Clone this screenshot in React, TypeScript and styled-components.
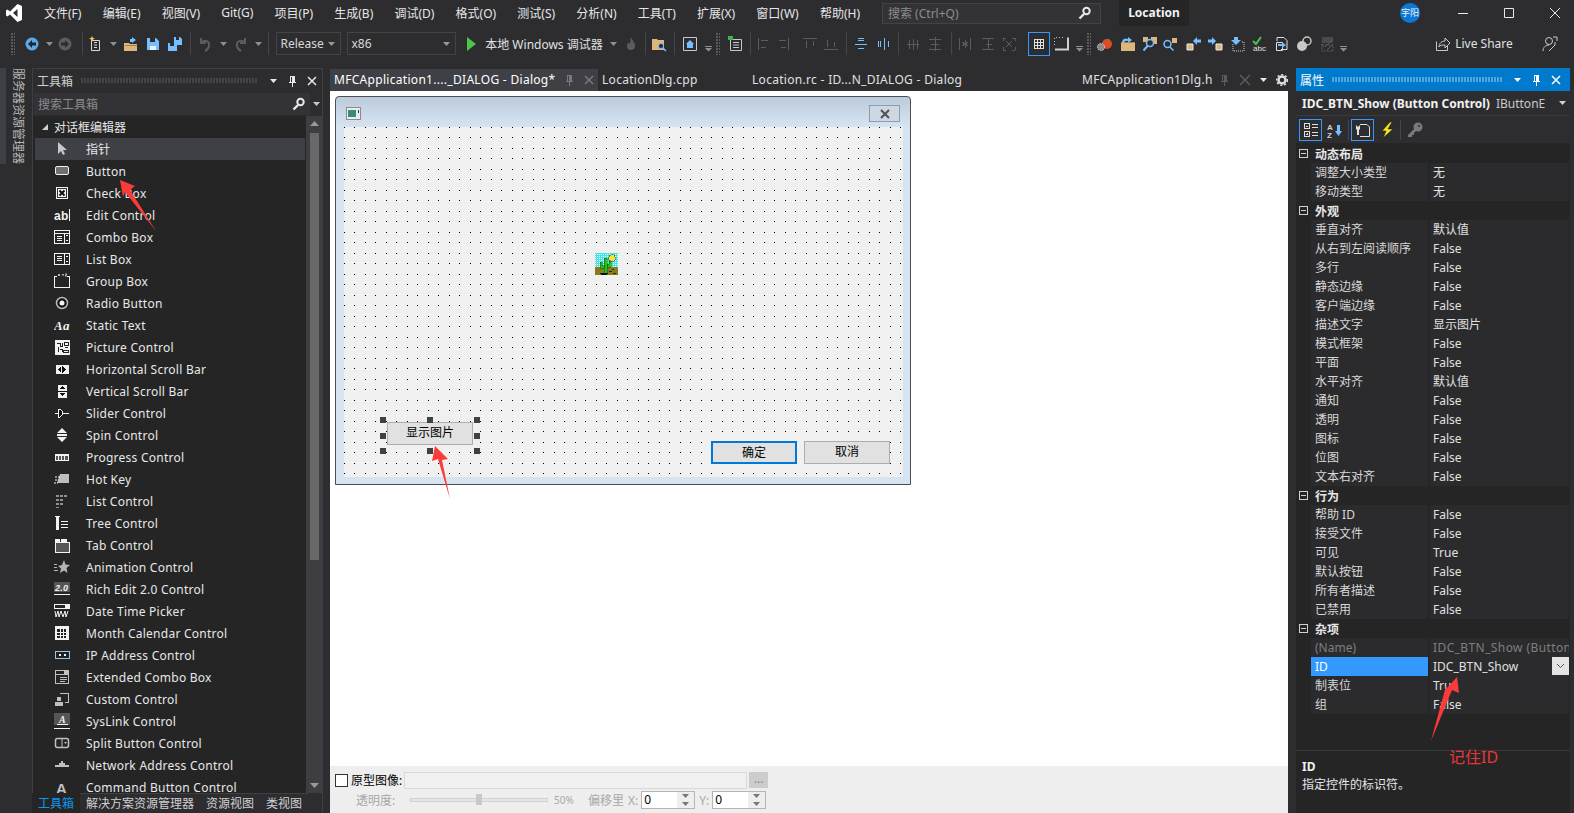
import React from 'react';
import styled, { createGlobalStyle } from 'styled-components';

const GlobalStyle = createGlobalStyle`
  html, body { margin: 0; padding: 0; background: #2d2d30; }
  body { font-family: "Noto Sans", "Noto Sans CJK SC", sans-serif; font-size: 12px; }
  * { box-sizing: border-box; }
`;

const Page = styled.div`
  position: relative;
  width: 1574px;
  height: 813px;
  overflow: hidden;
  background: #2d2d30;
  color: #f1f1f1;
`;

/* title bar */
const TitleBar = styled.div`
  display: flex;
  align-items: center;
  height: 26px;
`;

const Logo = styled.svg`
  width: 16px;
  height: 18px;
  margin-left: 6px;
  flex: none;
`;

const Menu = styled.div`
  display: flex;
  gap: 21.2px;
  margin-left: 22px;
  white-space: nowrap;
  color: #e6e6e6;
  width: 838px;
`;

const SearchBox = styled.div`
  display: flex;
  align-items: center;
  justify-content: space-between;
  width: 219px;
  height: 21px;
  padding: 0 8px 0 5px;
  background: #333337;
  border: 1px solid #434346;
  color: #8c8c8c;
`;

const SolutionName = styled.div`
  margin-left: 18px;
  width: 70px;
  height: 26px;
  line-height: 25px;
  text-align: center;
  font-weight: 700;
  background: #252526;
`;

const Avatar = styled.div`
  margin-left: 211px;
  width: 20px;
  height: 20px;
  border-radius: 50%;
  background: #0a78d7;
  font-size: 9px;
  line-height: 20px;
  text-align: center;
  white-space: nowrap;
  overflow: hidden;
`;

const WindowButtons = styled.div`
  display: flex;
  align-items: center;
  margin-left: 33px;
  gap: 26px;
`;

/* toolbar */
const ToolBar = styled.div`
  display: flex;
  align-items: center;
  height: 35px;
`;

const Slot = styled.div`
  flex: none;
  display: flex;
  align-items: center;
  justify-content: center;
`;

const Grip = styled.div`
  width: 4px;
  height: 22px;
  background-image: radial-gradient(circle at 1px 1px, #5c5c60 0.8px, transparent 0.9px);
  background-size: 3px 3px;
`;

const Sep = styled.div`
  width: 1px;
  height: 23px;
  background: #46464a;
`;

const ComboBox = styled.div`
  display: flex;
  align-items: center;
  justify-content: space-between;
  width: 100%;
  height: 23px;
  padding: 0 5px 0 4px;
  border: 1px solid #434346;
  color: #d8d8d8;
`;

const ToolText = styled.span`
  color: #e0e0e0;
  white-space: nowrap;
`;

const ActiveTool = styled.div`
  display: flex;
  align-items: center;
  justify-content: center;
  width: 22px;
  height: 24px;
  border: 1px solid #3399ff;
`;

/* docked layout */
const Main = styled.div`
  display: flex;
  height: 752px;
  padding-top: 7px;
`;

const Rail = styled.div`
  position: relative;
  display: flex;
  width: 32px;
  flex: none;
  gap: 6px;
`;

const RailStrip = styled.div`
  width: 6px;
  height: 96px;
  background: #3f3f46;
`;

const RailText = styled.div`
  writing-mode: vertical-rl;
  text-orientation: sideways;
  height: 96px;
  line-height: 12px;
  white-space: nowrap;
  color: #b4b4b4;
`;

const ToolWindow = styled.div`
  display: flex;
  flex-direction: column;
  width: 291px;
  height: 745px;
  flex: none;
  border: 1px solid #3f3f46;
  border-bottom: none;
  background: #252526;
`;

const PanelHead = styled.div<{ $active?: boolean }>`
  display: flex;
  align-items: center;
  flex: none;
  height: 23px;
  padding: 0 ${p => (p.$active ? '9px' : '5px')} 0 4px;
  gap: 8px;
  background: ${p => (p.$active ? '#007acc' : '#2d2d30')};
  color: ${p => (p.$active ? '#ffffff' : '#d0d0d0')};
`;

const HeadDots = styled.div<{ $active?: boolean }>`
  flex: 1;
  height: 5px;
  margin-right: 4px;
  background-image: radial-gradient(circle at 1px 1px, ${p => (p.$active ? '#59a8e0' : '#46464a')} 0.7px, transparent 0.8px);
  background-size: 3px 2px;
`;

const HeadIcons = styled.div`
  display: flex;
  align-items: center;
  gap: 9px;
`;

const ToolSearch = styled.div`
  display: flex;
  align-items: center;
  flex: none;
  height: 24px;
  background: #2d2d30;
  padding-bottom: 1px;
`;

const ToolSearchField = styled.div`
  display: flex;
  align-items: center;
  justify-content: space-between;
  width: 277px;
  height: 22px;
  margin-left: 1px;
  padding: 0 4px;
  background: #333337;
  color: #8a8a8a;
`;

const ToolBody = styled.div`
  flex: 1;
  min-height: 0;
  display: flex;
`;

const ToolList = styled.div`
  width: 272px;
  margin-left: 2px;
  overflow: hidden;
`;

const GroupRow = styled.div`
  display: flex;
  align-items: center;
  height: 22px;
  padding-left: 7px;
  gap: 6px;
  color: #e6e6e6;
`;

const ToolRow = styled.div<{ $selected?: boolean }>`
  display: flex;
  align-items: center;
  height: 22px;
  padding-left: 19px;
  gap: 16px;
  color: #e8e8e8;
  white-space: nowrap;
  letter-spacing: 0.25px;
  background: ${p => (p.$selected ? '#3f3f46' : 'transparent')};
`;

const ScrollBar = styled.div`
  display: flex;
  flex-direction: column;
  align-items: center;
  justify-content: space-between;
  width: 16px;
  margin-left: 1px;
  padding: 5px 0;
  background: #3e3e42;
`;

const ScrollThumb = styled.div`
  width: 9px;
  height: 427px;
  background: #686868;
  margin-top: 7px;
  margin-bottom: auto;
`;

const BottomTabs = styled.div`
  display: flex;
  flex: none;
  height: 20px;
  line-height: 19px;
  background: #2d2d30;
  margin-left: -1px;
`;

const BottomTab = styled.div<{ $active?: boolean }>`
  padding: 0 6px;
  white-space: nowrap;
  color: ${p => (p.$active ? '#0e97f0' : '#d0d0d0')};
  background: ${p => (p.$active ? '#252526' : 'transparent')};
  border-top: 1px solid ${p => (p.$active ? '#252526' : '#3f3f46')};
`;

/* center editor */
const Center = styled.div`
  display: flex;
  flex-direction: column;
  width: 958px;
  margin-left: 7px;
  flex: none;
`;

const TabWell = styled.div`
  display: flex;
  align-items: center;
  height: 23px;
  flex: none;
`;

const DocTab = styled.div<{ $active?: boolean; $w: number }>`
  display: flex;
  align-items: center;
  justify-content: space-between;
  width: ${p => p.$w}px;
  height: 22px;
  padding: 0 4px;
  white-space: nowrap;
  letter-spacing: 0.3px;
  background: ${p => (p.$active ? '#3f3f46' : 'transparent')};
  color: ${p => (p.$active ? '#ffffff' : '#e0e0e0')};
`;

const WellIcons = styled.div`
  display: flex;
  align-items: center;
  gap: 9px;
  margin-left: auto;
`;

const Canvas = styled.div`
  position: relative;
  flex: 1;
  min-height: 0;
  background: #ffffff;
`;

const DialogFrame = styled.div`
  position: absolute;
  left: 5px;
  top: 5px;
  width: 576px;
  height: 389px;
  padding: 0 7px 7px 8px;
  border: 1px solid #4d4d4f;
  border-top-left-radius: 4px;
  border-top-right-radius: 4px;
  background: linear-gradient(#bccbdb 0, #d6e4f2 30px);
  display: flex;
  flex-direction: column;
`;

const DialogCaption = styled.div`
  display: flex;
  align-items: center;
  justify-content: space-between;
  flex: none;
  height: 30px;
  padding: 3px 3px 0 2px;
`;

const CaptionClose = styled.div`
  display: flex;
  align-items: center;
  justify-content: center;
  width: 31px;
  height: 17px;
  border: 1px solid #8b9bb1;
  background: #cdd8e4;
`;

const DialogClient = styled.div`
  position: relative;
  flex: 1;
  background-color: #f0f0f0;
  background-image:
    radial-gradient(circle at 0.5px 0.5px, #000 0.6px, transparent 0.6px),
    radial-gradient(circle at 10.5px 0.5px, #000 0.6px, transparent 0.6px),
    radial-gradient(circle at 0.5px 10.5px, #000 0.6px, transparent 0.6px),
    radial-gradient(circle at 10.5px 10.5px, #000 0.6px, transparent 0.6px);
  background-size: 21px 21px;
`;

const DlgButton = styled.div<{ $x: number; $y: number; $default?: boolean }>`
  position: absolute;
  left: ${p => p.$x}px;
  top: ${p => p.$y}px;
  width: 86px;
  height: 23px;
  line-height: ${p => (p.$default ? '19px' : '20px')};
  text-align: center;
  color: #000;
  background: #e1e1e1;
  border: ${p => (p.$default ? '2px solid #0078d7' : '1px solid #adadad')};
`;

const Handle = styled.div<{ $x: number; $y: number }>`
  position: absolute;
  left: ${p => p.$x}px;
  top: ${p => p.$y}px;
  width: 6px;
  height: 6px;
  background: #404040;
`;

const DesertPicture = styled.svg`
  position: absolute;
  left: 251px;
  top: 126px;
  width: 23px;
  height: 22px;
`;

const ImageBar = styled.div`
  flex: none;
  height: 47px;
  padding: 5px 0 0 5px;
  background: #eeeeee;
  color: #000;
  display: flex;
  flex-direction: column;
  gap: 2px;
`;

const ImageRow = styled.div`
  display: flex;
  align-items: center;
  height: 18px;
`;

const CheckBox = styled.div`
  width: 13px;
  height: 13px;
  border: 1px solid #333;
  background: #fff;
  margin-right: 3px;
`;

const PathField = styled.div`
  width: 343px;
  height: 17px;
  margin-left: 2px;
  border: 1px solid #d9d9d9;
  background: #f0f0f0;
`;

const BrowseButton = styled.div`
  width: 19px;
  height: 16px;
  margin-left: 2px;
  line-height: 14px;
  text-align: center;
  color: #888;
  background: #cccccc;
`;

const Muted = styled.span<{ $x: number; $w?: number; $small?: boolean }>`
  margin-left: ${p => p.$x}px;
  width: ${p => (p.$w ? `${p.$w}px` : 'auto')};
  font-size: ${p => (p.$small ? '10px' : '12px')};
  color: #a8a8a8;
  white-space: nowrap;
  flex: none;
`;

const Slider = styled.div`
  position: relative;
  width: 138px;
  height: 4px;
  margin-left: 7px;
  background: #e2e6e6;
  border: 1px solid #d0d4d4;
`;

const SliderThumb = styled.div`
  position: absolute;
  left: 65px;
  top: -5px;
  width: 6px;
  height: 11px;
  background: #c8c8c8;
`;

const Spin = styled.div`
  display: flex;
  justify-content: space-between;
  width: 54px;
  height: 18px;
  margin-left: 3px;
  border: 1px solid #b5b5b5;
  background: #fff;
  line-height: 16px;
  padding-left: 2px;
  color: #000;
`;

const SpinArrows = styled.div`
  display: flex;
  flex-direction: column;
  align-items: center;
  justify-content: space-around;
  width: 17px;
  background: #eeeeee;
`;

/* properties */
const PropsWindow = styled.div`
  display: flex;
  flex-direction: column;
  width: 274px;
  height: 745px;
  margin-left: 8px;
  flex: none;
  background: #252526;
`;

const PropsTitle = styled.div`
  display: flex;
  align-items: center;
  justify-content: space-between;
  flex: none;
  height: 25px;
  padding: 0 4px 0 6px;
  background: #2d2d30;
  border-bottom: 1px solid #3a3a3d;
  white-space: nowrap;
`;

const PropsBold = styled.span`
  font-weight: 700;
  color: #f1f1f1;
`;

const PropsType = styled.span`
  color: #c8c8c8;
  margin-left: 6px;
  margin-right: auto;
`;

const PropsTools = styled.div`
  display: flex;
  align-items: center;
  flex: none;
  height: 27px;
  padding: 0 3px;
  gap: 1px;
  background: #2d2d30;
`;

const PropTool = styled.div<{ $on?: boolean }>`
  display: flex;
  align-items: center;
  justify-content: center;
  width: 23px;
  height: 22px;
  border: 1px solid ${p => (p.$on ? '#3399ff' : 'transparent')};
`;

const PropSep = styled.div`
  width: 1px;
  height: 20px;
  margin: 0 1px;
  background: #46464a;
`;

const PropGrid = styled.div`
  flex: none;
  height: 608px;
  padding-top: 1px;
  border-bottom: 1px solid #3a3a3d;
`;

const CatRow = styled.div`
  display: flex;
  align-items: center;
  height: 19px;
  padding-left: 3px;
  gap: 7px;
  font-weight: 700;
  color: #e6e6e6;
`;

const ExpandBox = styled.div`
  position: relative;
  width: 9px;
  height: 9px;
  border: 1px solid #d0d0d0;
  &::after {
    content: '';
    position: absolute;
    left: 1px;
    top: 3px;
    width: 5px;
    height: 1px;
    background: #d0d0d0;
  }
`;

const PropRow = styled.div`
  display: grid;
  grid-template-columns: 117px 139px;
  column-gap: 2px;
  height: 19px;
  margin-left: 15px;
  padding-bottom: 1px;
  line-height: 19px;
`;

const PropName = styled.div<{ $selected?: boolean; $dim?: boolean }>`
  padding-left: 4px;
  white-space: nowrap;
  background: ${p => (p.$selected ? '#3399ff' : '#2b2b2d')};
  color: ${p => (p.$selected ? '#fff' : p.$dim ? '#7f7f7f' : '#d8d8d8')};
`;

const PropValue = styled.div<{ $dim?: boolean }>`
  position: relative;
  padding-left: 3px;
  overflow: hidden;
  white-space: nowrap;
  letter-spacing: ${p => (p.$dim ? '0.4px' : '0')};
  background: #2b2b2d;
  color: ${p => (p.$dim ? '#7f7f7f' : '#e0e0e0')};
`;

const ValueDrop = styled.div`
  position: absolute;
  right: 0;
  top: 0;
  display: flex;
  align-items: center;
  justify-content: center;
  width: 17px;
  height: 18px;
  background: #e4e4e4;
`;

const PropDescription = styled.div`
  flex: 1;
  padding: 7px 6px;
  line-height: 18px;
  color: #e6e6e6;
`;

/* annotations lying over the ide */
const Annotation = styled.svg`
  position: absolute;
  left: 0;
  top: 0;
  width: 1574px;
  height: 813px;
  pointer-events: none;
`;

const RedNote = styled.div`
  position: absolute;
  left: 1449px;
  top: 746px;
  font-size: 16px;
  line-height: 22px;
  color: #e8353a;
`;

const Ic: React.FC<{ s?: number; h?: number; children: React.ReactNode }> = ({ s = 16, h, children }) => (
  <svg width={s} height={h ?? s} viewBox={`0 0 ${s} ${h ?? s}`} style={{ display: 'block', flex: 'none' }}>
    {children}
  </svg>
);

const Tri = ({ c = '#c8c8c8' }: { c?: string }) => (
  <Ic s={7} h={4}><path d="M0 0h7L3.5 4z" fill={c} /></Ic>
);

const Pin = ({ c = '#e8e8e8' }: { c?: string }) => (
  <Ic s={12}><path d="M4 1h5v6h1v1H7v4H6V8H3V7h1zM5 2v5h1V2z" fill={c} /></Ic>
);

const Cross = ({ c = '#e8e8e8', s = 10, w = 1.5 }: { c?: string; s?: number; w?: number }) => (
  <Ic s={s}><path d={`M1 1L${s - 1} ${s - 1}M${s - 1} 1L1 ${s - 1}`} stroke={c} strokeWidth={w} fill="none" /></Ic>
);

const Magnifier = () => (
  <Ic s={14}>
    <circle cx="8.5" cy="5" r="3.2" fill="none" stroke="#e8e8e8" strokeWidth="2" />
    <path d="M6 8l-4.5 4.5" stroke="#e8e8e8" strokeWidth="2.4" />
  </Ic>
);

const BLUE = '#75beff';
const ORANGE = '#dcb67a';
const DIM = '#5c5c5f';

const alignIcon = (d: string, c = DIM) => <path d={d} stroke={c} strokeWidth="1" fill="none" shapeRendering="crispEdges" />;

const toolIcons: Record<string, React.ReactNode> = {
  back: <><circle cx="8" cy="8" r="6.5" fill="#5aa9ec" /><path d="M4 8l4-4v2.5h4v3H8V12z" fill="#252526" /></>,
  forward: <><circle cx="8" cy="8" r="6.5" fill={DIM} /><path d="M12 8L8 4v2.5H4v3h4V12z" fill="#2d2d30" /></>,
  newItem: <><path d="M3.5 4.5h8v10h-8z" fill="none" stroke="#d8d8d8" /><path d="M6 6.5h3M6 9h3M6 11.5h3" stroke="#d8d8d8" /><path d="M4 0l1 2 2 .5-2 1-1 2-1-2-2-1 2-.5z" fill="#f0c850" /></>,
  open: <><path d="M1 7h5l1 1h7v7H1z" fill={ORANGE} /><path d="M2 9h12v1H2z" fill="#a8803c" /><path d="M7 6V3h2V1l4 3-4 3V5H9v1z" fill={BLUE} /></>,
  save: <><path d="M2 2h9l3 3v9H2z" fill={BLUE} /><path d="M5 2h5v4H5z" fill="#2d2d30" /><path d="M5 10h6v4H5z" fill="#e8f4ff" /></>,
  saveAll: <><path d="M7 1h6l2 2v6H7z" fill={BLUE} /><path d="M9 1h3v3H9z" fill="#2d2d30" /><path d="M1 7h7l2 2v6H1z" fill={BLUE} /><path d="M3 7h4v3H3z" fill="#2d2d30" /></>,
  undo: <path d="M4 2v5h5M4 7c4-4 9-2 8 3-.4 2-2 4-4 5" stroke={DIM} strokeWidth="2" fill="none" />,
  redo: <path d="M12 2v5H7M12 7C8 3 3 5 4 10c.4 2 2 4 4 5" stroke={DIM} strokeWidth="2" fill="none" />,
  play: <path d="M4 1l9 7-9 7z" fill="#4ec24e" />,
  flame: <path d="M8 1c1 3 4 5 4 9a4 4 0 0 1-8 0c0-2 1-3 2-4 0 1 1 2 1 2 1-2 0-4 1-7z" fill={DIM} />,
  folderFind: <><path d="M1 3h5l1 1h6v10H1z" fill={ORANGE} /><circle cx="10" cy="10" r="2.6" fill="#2d2d30" stroke={BLUE} /><path d="M12 12l3 3" stroke={BLUE} strokeWidth="1.5" /></>,
  homeBox: <><path d="M1.5 1.5h13v13h-13z" fill="none" stroke="#c8c8c8" /><path d="M8 4l4 4h-1v4H5V8H4z" fill={BLUE} /></>,
  flagList: <><path d="M3.5 3.5h11v11h-11z" fill="none" stroke="#c8c8c8" /><path d="M6 6.5h6M6 9h6M6 11.5h6" stroke="#c8c8c8" /><path d="M1 0h5v4H1z" fill="#3fb34f" /></>,
  a1: alignIcon('M2.5 2v12M5 4.5h7M5 11.5h5'),
  a2: alignIcon('M13.5 2v12M4 4.5h7M6 11.5h5'),
  a3: alignIcon('M1 2.5h14M4.5 5v7M11.5 5v5'),
  a4: alignIcon('M1 13.5h14M4.5 4v7M11.5 6v5'),
  a5: alignIcon('M2 8.5h12M5 4.5h6M5 12.5h6M5 2.5h6', BLUE),
  a6: alignIcon('M8.5 2v12M4.5 5v6M12.5 5v6M2.5 5v6', BLUE),
  a7: alignIcon('M2 8.5h12M4.5 4v9M8.5 3v11M12.5 4v9'),
  a8: alignIcon('M2 3.5h12M4 8.5h8M2 13.5h12M8.5 1v14'),
  a9: alignIcon('M2.5 2v12M13.5 2v12M5 6l6 4M11 6l-6 4M8.5 4v8'),
  a10: alignIcon('M2 2.5h12M2 13.5h12M8.5 3v10M5.5 8.5h6'),
  a11: alignIcon('M2 2h3M2 2v3M14 2h-3M14 2v3M2 14h3M2 14v-3M14 14h-3M14 14v-3M5 5l6 6M11 5l-6 6'),
  ruler: <><path d="M2 13.5h13v-12" fill="none" stroke="#d0d0d0" strokeWidth="2" /><path d="M1.5 2v9M3 1.5h9" fill="none" stroke="#c0c0c0" strokeDasharray="1 2" /></>,
  tomato: <><circle cx="11" cy="8" r="5" fill="#e04a28" /><path d="M8 3l3 1 3-2-2 3z" fill="#4a9a3a" /><circle cx="5" cy="11" r="3.6" fill="#8a8a8a" stroke="#d0d0d0" strokeDasharray="1.5 1" /></>,
  folderRefresh: <><path d="M1 6h14v9H1z" fill={ORANGE} /><path d="M1 6h14v1H1z" fill="#a8803c" /><path d="M2 7a4 4 0 0 1 6-4V1l4 3-4 3V5a3 3 0 0 0-4 2z" fill={BLUE} /></>,
  findDoc: <><path d="M1 1h5v5H1zM9 1h6v7H9z" fill={ORANGE} /><circle cx="8" cy="7" r="3.5" fill="#2d2d30" stroke={BLUE} strokeWidth="1.5" /><path d="M5.5 10l-4 4.5" stroke={BLUE} strokeWidth="2" /></>,
  findSmall: <><circle cx="5.5" cy="8" r="3.5" fill="none" stroke={BLUE} strokeWidth="1.5" /><path d="M8 11l3.5 3.5" stroke={BLUE} strokeWidth="1.5" /><path d="M10 2h5v5h-5z" fill={ORANGE} /></>,
  prevSq: <><path d="M1 8h6v6H1z" fill={ORANGE} stroke="#eee" /><path d="M7 5l4-4v2.5h4v3h-4V9z" fill={BLUE} /></>,
  nextSq: <><path d="M9 8h6v6H9z" fill={ORANGE} stroke="#eee" /><path d="M9 5L5 1v2.5H1v3h4V9z" fill={BLUE} /></>,
  stepIn: <><path d="M3 8v7h11V6h-3" fill="none" stroke="#d0d0d0" strokeDasharray="1 1" /><path d="M6 9L1 4h3V1h4v3h3z" fill={BLUE} /></>,
  checkAbc: <><path d="M2 5l3 3 5-7" fill="none" stroke="#4ec24e" strokeWidth="2" /><text x="2" y="15" fontSize="8" fill="#e0e0e0" fontFamily="Liberation Sans, sans-serif">abc</text></>,
  docArrow: <><path d="M4 5V1.5h7l3 3v9h-6M3.5 6.5v8h6v-8z" fill="none" stroke="#e0e0e0" /><path d="M5 8h4V6l4 3-4 3v-2H5z" fill={BLUE} /></>,
  ballRing: <><circle cx="6" cy="10" r="5" fill="#c8c8c8" /><circle cx="11" cy="5" r="4" fill="none" stroke="#c8c8c8" strokeWidth="1.5" /></>,
  hatch: <><path d="M3 1h11v6H3z" fill="#4a4a4c" /><path d="M3 9h11v6H3z" fill="none" stroke={DIM} strokeDasharray="2 1" /><path d="M2 8l3 3M14 3l-8 8M14 8l-6 6" stroke={DIM} /></>,
  liveShare: <><path d="M1.5 5.5v9h11v-5" fill="none" stroke="#c8c8c8" /><path d="M4 11c0-4 3-6 6-6V2l5 5-5 5V9c-3 0-5 0-6 2z" fill="#2d2d30" stroke="#c8c8c8" /></>,
  feedback: <><circle cx="7" cy="5" r="3.5" fill="none" stroke="#c8c8c8" /><path d="M1 15c0-4 3-6 6-6M11 1h4v4M13 6v3l-6 6" fill="none" stroke="#c8c8c8" /></>,
};

type TbItem = [string, number, number?];

const toolbarItems: TbItem[] = [
  ['grip', 13, 4], ['back', 32], ['drop', 49, 7], ['forward', 65], ['sep', 82, 1],
  ['newItem', 96], ['drop', 113, 7], ['open', 131], ['save', 153], ['saveAll', 175], ['sep', 190, 1],
  ['undo', 205], ['drop', 223, 7], ['redo', 241], ['drop', 258, 7], ['sep', 268, 1],
  ['release', 308, 65], ['x86', 401, 109], ['play', 471], ['debug', 544, 122], ['drop', 613, 7], ['flame', 631], ['sep', 645, 1],
  ['folderFind', 659], ['sep', 674, 1], ['homeBox', 690], ['dropLow', 708, 7], ['grip', 718, 4], ['flagList', 735], ['sep', 750, 1],
  ['a1', 764], ['a2', 783], ['a3', 810], ['a4', 831], ['sep', 846, 1],
  ['a5', 861], ['a6', 884], ['sep', 898, 1], ['a7', 913], ['a8', 935], ['sep', 951, 1],
  ['a9', 965], ['a10', 988], ['a11', 1009], ['grid', 1039, 22], ['ruler', 1061], ['dropLow', 1079, 7], ['grip', 1089, 4],
  ['tomato', 1104], ['folderRefresh', 1128], ['findDoc', 1150], ['findSmall', 1170], ['prevSq', 1194], ['nextSq', 1215],
  ['stepIn', 1238], ['checkAbc', 1259], ['docArrow', 1281], ['ballRing', 1304], ['hatch', 1327], ['dropLow', 1343, 7],
  ['liveShare', 1443], ['liveText', 1484, 60], ['feedback', 1550],
];

const renderToolItem = (name: string) => {
  switch (name) {
    case 'grip': return <Grip />;
    case 'sep': return <Sep />;
    case 'drop': return <Tri c="#8f8f8f" />;
    case 'dropLow':
      return (
        <Ic s={7} h={16}><path d="M0 10h7v1H0zM0 12h7l-3.5 3.5z" fill="#8f8f8f" /></Ic>
      );
    case 'release': return <ComboBox>Release<Tri c="#999" /></ComboBox>;
    case 'x86': return <ComboBox>x86<Tri c="#999" /></ComboBox>;
    case 'debug': return <ToolText>本地 Windows 调试器</ToolText>;
    case 'liveText': return <ToolText>Live Share</ToolText>;
    case 'grid':
      return (
        <ActiveTool>
          <Ic s={14}><path d="M2.5 2.5h9v9h-9zM5.5 2.5v9M8.5 2.5v9M2.5 5.5h9M2.5 8.5h9" fill="none" stroke="#e0e0e0" shapeRendering="crispEdges" /></Ic>
        </ActiveTool>
      );
    default: return <Ic>{toolIcons[name]}</Ic>;
  }
};

const W = '#f2f2f2';
const px = { shapeRendering: 'crispEdges' as const };

const controlIcons: Record<string, React.ReactNode> = {
  pointer: <path d="M4 1v12l3-3 2 4 2-1-2-4h4z" fill="#c8c8c8" />,
  button: <rect x="1.5" y="3.5" width="13" height="8" rx="1.5" fill="#707070" stroke={W} />,
  check: <><rect x="2" y="2" width="12" height="12" fill={W} {...px} /><path d="M3.500 3.500h9v9h-9z" fill="none" stroke="#333" {...px} /><path d="M5.500 5.500l5 5M10.500 5.500l-5 5" stroke="#111" strokeWidth="2" /></>,
  edit: <><text x="0" y="13" fontSize="12" fontWeight="700" fill={W} fontFamily="Liberation Sans, sans-serif">ab</text><path d="M15.5 2v12" stroke={W} {...px} /></>,
  combo: <g {...px} fill="none" stroke={W}><path d="M.5 1.5h15v13H.5zM.5 4.5h15M10.5 4.5v10M3 7.5h5M3 9.5h5M3 11.5h5" /><path d="M12 6.5h2M12 11.5h2" /></g>,
  list: <g {...px} fill="none" stroke={W}><path d="M.5 2.5h15v11H.5zM10.5 2.5v11M3 5.5h5M3 7.5h5M3 9.5h5M12 5.5h2M12 10.5h2" /></g>,
  group: <g fill="none" stroke={W}><path d="M3 3.500H.5v11h15v-11H13" {...px} /><path d="M4 1l2 2M6 1L4 3M8 1l1 1 1-1M9 2v1M11 1h2l-2 2h2" strokeWidth="0.700" /></g>,
  radio: <><circle cx="8" cy="8" r="5.5" fill="#111" stroke="#bbb" strokeWidth="1.5" /><circle cx="8" cy="8" r="2.5" fill={W} /></>,
  staticText: <text x="0" y="13" fontSize="13" fontStyle="italic" fontWeight="700" fill={W} fontFamily="Liberation Serif, serif">Aa</text>,
  picture: <g {...px}><rect x="1" y="1" width="15" height="15" fill={W} /><path d="M3 4h3v3h2V4M4 8v5M6 10h2v3M10 3h4v3h-4zM9 11h5v2H9zM11 8h3" stroke="#222" fill="none" /></g>,
  hscroll: <g {...px}><rect x="2" y="4" width="13" height="9" fill={W} /><path d="M8 5v7" stroke="#111" /><path d="M7 6v5L4 8.5zM9 6v5l3-2.500z" fill="#111" /></g>,
  vscroll: <g {...px}><rect x="4" y="1.5" width="9" height="13" fill={W} /><path d="M4 8h9" stroke="#111" /><path d="M6 6l2.5-3L11 6zM6 10l2.5 3L11 10z" fill="#111" /></g>,
  slider: <g {...px}><path d="M1 8h14" stroke={W} /><path d="M4 4h2l2 2v4l-2 2H4z" fill="#111" stroke={W} /></g>,
  spin: <path d="M8 1l5 5H3zM8 15l-5-5h10zM3 7h10v2H3z" fill={W} />,
  progress: <g {...px}><rect x="1" y="5" width="14" height="7" fill={W} /><path d="M2 6.500h12v4H2z" fill="#555" /><path d="M4 6v5M7 6v5M10 6v5" stroke={W} /></g>,
  hotkey: <><path d="M6 3h9v9H3z" fill="#bdbdbd" /><path d="M1 6h5M1 9h4M0 12h4" stroke={W} strokeDasharray="2 1" /></>,
  listCtl: <g {...px} fill="#909090"><path d="M2 2h3v2H2zM6 2h3v2H6zM10 2h3v2h-3zM2 6h3v2H2zM6 6h3v2H6zM2 10h3v2H2zM6 10h3v2H6zM2 14h3v1H2z" /></g>,
  tree: <g {...px} fill="none" stroke={W}><path d="M1 1.500h5M3 2v13M4.500 2v13" strokeWidth="1.400" /><path d="M7 6.500h7M7 9.500h7M7 12.500h7" strokeWidth="1.400" /></g>,
  tab: <g {...px}><path d="M1 5h14v10H1z" fill="#555" stroke={W} /><path d="M1 2h5v3H1zM7 2h6v3H7z" fill={W} /></g>,
  animation: <path d="M10 1l1.5 4.500L16 6l-3.500 3 1 5L10 11.500 6 14l1-4.500L4 7l4-1z M0 5h3v1H0zM0 8h3v1H0zM0 11h4v1H0z" fill="#b5b5b5" />,
  richEdit: <><rect x="0" y="1" width="16" height="10" fill="#555" /><text x="1" y="10" fontSize="9" fontWeight="700" fontStyle="italic" fill={W} fontFamily="Liberation Sans, sans-serif">2.0</text><path d="M0 13h16" stroke={W} {...px} /></>,
  dateTime: <g><path d="M.5 1.500h15v4H.5z" fill="none" stroke={W} {...px} /><path d="M11 2h4v3h-4z" fill={W} /><path d="M1 8l1 6 2-6 1 6 2-6 2 6 2-6 1 6 2-6" fill="none" stroke={W} /></g>,
  calendar: <g {...px}><rect x="1" y="1" width="14" height="14" fill={W} /><path d="M3 4h10v9H3z" fill="#222" /><path d="M3 7h10M3 10h10M6 4v9M9 4v9M12 4v9" stroke={W} /></g>,
  ip: <g {...px}><rect x="1.500" y="4.500" width="14" height="7" fill="#222" stroke="#9cc4e4" /><path d="M5 7h2v2H5zM10 7h2v2h-2z" fill={W} /></g>,
  extCombo: <g {...px} fill="none" stroke="#c0c0c0"><path d="M1.500 1.500h13v13h-13zM1.500 5.500h13M5.500 8.500h7M5.500 10.500h7M5.500 12.500h5" /><path d="M10 2.500h4v2h-4z" fill="#c0c0c0" /></g>,
  custom: <g {...px}><path d="M5.500 2.500h9v9h-4" fill="none" stroke="#c0c0c0" /><circle cx="5" cy="8" r="2.500" fill="#c0c0c0" /><path d="M1 11h8v4H1z" fill="#c0c0c0" /></g>,
  syslink: <><rect x="0" y="0" width="16" height="12" fill="#555" /><text x="5" y="10" fontSize="10" fontStyle="italic" fontWeight="700" fill={W} fontFamily="Liberation Serif, serif">A</text><path d="M3 11h11M0 15h16" stroke={W} {...px} /></>,
  split: <><rect x="1.500" y="3.500" width="13" height="9" rx="2" fill="none" stroke="#c0c0c0" strokeWidth="1.500" /><path d="M8 4v8" stroke="#c0c0c0" /><path d="M10 7h3l-1.500 2z" fill="#c0c0c0" /></>,
  network: <g {...px} fill="#c0c0c0"><path d="M1 8h14v2H1zM5 6h6v3H5zM7 4h2v3H7z" /></g>,
  command: <text x="2" y="15" fontSize="15" fontWeight="700" fill="#c0c0c0" fontFamily="Liberation Sans, sans-serif">A</text>,
};

const controls: [string, string][] = [
  ['pointer', '指针'], ['button', 'Button'], ['check', 'Check Box'], ['edit', 'Edit Control'], ['combo', 'Combo Box'],
  ['list', 'List Box'], ['group', 'Group Box'], ['radio', 'Radio Button'], ['staticText', 'Static Text'],
  ['picture', 'Picture Control'], ['hscroll', 'Horizontal Scroll Bar'], ['vscroll', 'Vertical Scroll Bar'],
  ['slider', 'Slider Control'], ['spin', 'Spin Control'], ['progress', 'Progress Control'], ['hotkey', 'Hot Key'],
  ['listCtl', 'List Control'], ['tree', 'Tree Control'], ['tab', 'Tab Control'], ['animation', 'Animation Control'],
  ['richEdit', 'Rich Edit 2.0 Control'], ['dateTime', 'Date Time Picker'], ['calendar', 'Month Calendar Control'],
  ['ip', 'IP Address Control'], ['extCombo', 'Extended Combo Box'], ['custom', 'Custom Control'],
  ['syslink', 'SysLink Control'], ['split', 'Split Button Control'], ['network', 'Network Address Control'],
  ['command', 'Command Button Control'],
];

const propGroups: { title: string; rows: [string, string][] }[] = [
  { title: '动态布局', rows: [['调整大小类型', '无'], ['移动类型', '无']] },
  {
    title: '外观',
    rows: [
      ['垂直对齐', '默认值'], ['从右到左阅读顺序', 'False'], ['多行', 'False'], ['静态边缘', 'False'], ['客户端边缘', 'False'],
      ['描述文字', '显示图片'], ['模式框架', 'False'], ['平面', 'False'], ['水平对齐', '默认值'], ['通知', 'False'],
      ['透明', 'False'], ['图标', 'False'], ['位图', 'False'], ['文本右对齐', 'False'],
    ],
  },
  {
    title: '行为',
    rows: [['帮助 ID', 'False'], ['接受文件', 'False'], ['可见', 'True'], ['默认按钮', 'False'], ['所有者描述', 'False'], ['已禁用', 'False']],
  },
  { title: '杂项', rows: [['(Name)', 'IDC_BTN_Show (Button'], ['ID', 'IDC_BTN_Show'], ['制表位', 'True'], ['组', 'False']] },
];

const menus = ['文件(F)', '编辑(E)', '视图(V)', 'Git(G)', '项目(P)', '生成(B)', '调试(D)', '格式(O)', '测试(S)', '分析(N)', '工具(T)', '扩展(X)', '窗口(W)', '帮助(H)'];

const handles: [number, number][] = [[36, 290], [83, 290], [130, 290], [36, 306], [130, 306], [36, 321], [83, 321], [130, 321]];

const App: React.FC = () => {
  let toolEnd = 0;
  return (
    <Page>
      <GlobalStyle />
      <TitleBar>
        <Logo viewBox="0 0 16 18">
          <path d="M11.5 0L16 2v14l-4.500 2L4 10.500 1.500 12.500 0 11.500V6.500l1.500-1L4 7.500zM11.500 5L7 9l4.500 4z" fill="#ffffff" fillRule="evenodd" />
        </Logo>
        <Menu>{menus.map(m => <span key={m}>{m}</span>)}</Menu>
        <SearchBox>搜索 (Ctrl+Q)<Magnifier /></SearchBox>
        <SolutionName>Location</SolutionName>
        <Avatar>宇阳</Avatar>
        <WindowButtons>
          <Ic s={20}><path d="M5 10.500h10" stroke="#e8e8e8" /></Ic>
          <Ic s={20}><path d="M5.500 5.500h9v9h-9z" stroke="#e8e8e8" fill="none" /></Ic>
          <Ic s={20}><path d="M5 5l10 10M15 5L5 15" stroke="#e8e8e8" fill="none" /></Ic>
        </WindowButtons>
      </TitleBar>

      <ToolBar>
        {toolbarItems.map(([name, center, w = 16], i) => {
          const gap = center - w / 2 - toolEnd;
          toolEnd = center + w / 2;
          return <Slot key={i} style={{ marginLeft: gap, width: w }}>{renderToolItem(name)}</Slot>;
        })}
      </ToolBar>

      <Main>
        <Rail>
          <RailStrip />
          <RailText>服务器资源管理器</RailText>
        </Rail>

        <ToolWindow>
          <PanelHead>
            工具箱
            <HeadDots />
            <HeadIcons><Tri c="#e8e8e8" /><Pin /><Cross /></HeadIcons>
          </PanelHead>
          <ToolSearch>
            <ToolSearchField>搜索工具箱<Magnifier /></ToolSearchField>
            <Slot style={{ width: 12 }}><Tri c="#c8c8c8" /></Slot>
          </ToolSearch>
          <ToolBody>
            <ToolList>
              <GroupRow>
                <Ic s={6} h={6}><path d="M6 0v6H0z" fill="#d0d0d0" /></Ic>
                对话框编辑器
              </GroupRow>
              {controls.map(([icon, label], i) => (
                <ToolRow key={label} $selected={i === 0}>
                  <Ic>{controlIcons[icon]}</Ic>
                  {label}
                </ToolRow>
              ))}
            </ToolList>
            <ScrollBar>
              <Ic s={9} h={5}><path d="M4.500 0L9 5H0z" fill="#999" /></Ic>
              <ScrollThumb />
              <Ic s={9} h={5}><path d="M4.500 5L9 0H0z" fill="#999" /></Ic>
            </ScrollBar>
          </ToolBody>
          <BottomTabs>
            <BottomTab $active>工具箱</BottomTab>
            <BottomTab>解决方案资源管理器</BottomTab>
            <BottomTab>资源视图</BottomTab>
            <BottomTab>类视图</BottomTab>
          </BottomTabs>
        </ToolWindow>

        <Center>
          <TabWell>
            <DocTab $active $w={268}>
              MFCApplication1...._DIALOG - Dialog*
              <HeadIcons><Pin c="#7a7a7a" /><Cross c="#7a7a7a" /></HeadIcons>
            </DocTab>
            <DocTab $w={150}>LocationDlg.cpp</DocTab>
            <DocTab $w={330}>Location.rc - ID...N_DIALOG - Dialog</DocTab>
            <DocTab $w={136}>MFCApplication1Dlg.h</DocTab>
            <WellIcons>
              <Pin c="#5c5c5f" />
              <Cross c="#5c5c5f" s={12} />
              <Tri c="#e8e8e8" />
              <Ic s={12}>
                <circle cx="6" cy="6" r="3.500" fill="none" stroke="#e0e0e0" strokeWidth="2.500" />
                <circle cx="6" cy="6" r="5.400" fill="none" stroke="#e0e0e0" strokeWidth="1.500" strokeDasharray="2 2" />
              </Ic>
            </WellIcons>
          </TabWell>
          <Canvas>
            <DialogFrame>
              <DialogCaption>
                <Ic s={15} h={13}>
                  <rect x="0.500" y="0.500" width="14" height="12" fill="#e8edf2" stroke="#8a8a8a" />
                  <rect x="2" y="3" width="8" height="7" fill="#3a8a78" />
                  <rect x="12" y="3" width="1" height="3" fill="#333" />
                </Ic>
                <CaptionClose><Cross c="#555" w={2.200} /></CaptionClose>
              </DialogCaption>
              <DialogClient>
                <DesertPicture viewBox="0 0 23 22" shapeRendering="crispEdges">
                  <rect width="23" height="14" fill="#3fe8e8" />
                  <path d="M0 1h23M0 3h23M0 5h23M0 7h23M0 9h23M0 11h23M0 13h23" stroke="#ffffff" strokeDasharray="1 1" />
                  <circle cx="17" cy="5" r="3.500" fill="#f6e62e" stroke="#333" strokeWidth="0.500" />
                  <rect y="14" width="23" height="8" fill="#8a7a1e" />
                  <path d="M14 18h3M17 16h2M5 20h2M18 20h3" stroke="#2a2a10" />
                  <path d="M9 5h3v15H9zM5 9h2v3h2v3H5zM14 8h2v6h-4v-3h2z" fill="#1fc21f" stroke="#0c5a0c" strokeWidth="0.500" />
                  <path d="M7 20h6l-2 2H6z" fill="#111" />
                </DesertPicture>
                <DlgButton $x={43} $y={295}>显示图片</DlgButton>
                {handles.map(([x, y]) => <Handle key={`${x}-${y}`} $x={x} $y={y} />)}
                <DlgButton $default $x={367} $y={314}>确定</DlgButton>
                <DlgButton $x={460} $y={314}>取消</DlgButton>
              </DialogClient>
            </DialogFrame>
          </Canvas>
          <ImageBar>
            <ImageRow>
              <CheckBox />
              原型图像:
              <PathField />
              <BrowseButton>...</BrowseButton>
            </ImageRow>
            <ImageRow>
              <Muted $x={21} $w={47}>透明度:</Muted>
              <Slider><SliderThumb /></Slider>
              <Muted $x={6} $small $w={26}>50%</Muted>
              <Muted $x={8}>偏移里</Muted>
              <Muted $x={4}>X:</Muted>
              <Spin>0<SpinArrows><Tri c="#777" /><Tri c="#777" /></SpinArrows></Spin>
              <Muted $x={4}>Y:</Muted>
              <Spin>0<SpinArrows><Tri c="#777" /><Tri c="#777" /></SpinArrows></Spin>
            </ImageRow>
          </ImageBar>
        </Center>

        <PropsWindow>
          <PanelHead $active>
            属性
            <HeadDots $active />
            <HeadIcons><Tri c="#fff" /><Pin c="#fff" /><Cross c="#fff" /></HeadIcons>
          </PanelHead>
          <PropsTitle>
            <PropsBold>IDC_BTN_Show (Button Control)</PropsBold>
            <PropsType>IButtonE</PropsType>
            <Tri c="#d0d0d0" />
          </PropsTitle>
          <PropsTools>
            <PropTool $on>
              <Ic><path d="M1.500 1.500h5v5h-5zM1.500 9.500h5v5h-5zM9 2.500h6M9 5.500h6M9 10.500h6M9 13.500h6M3 4h2M3 12h2M4 11v2" fill="none" stroke="#e0e0e0" shapeRendering="crispEdges" /></Ic>
            </PropTool>
            <PropTool>
              <Ic>
                <text x="0" y="8" fontSize="8" fontWeight="700" fill="#d0d0d0" fontFamily="Liberation Sans, sans-serif">A</text>
                <text x="0" y="16" fontSize="8" fontWeight="700" fill="#d0d0d0" fontFamily="Liberation Sans, sans-serif">Z</text>
                <path d="M10 3h3v6h2l-3.500 5L8 9h2z" fill="#75beff" />
              </Ic>
            </PropTool>
            <PropSep />
            <PropTool $on>
              <Ic><path d="M5 2.500h7l2.500 2.500v9.500H5" fill="none" stroke="#e0e0e0" /><path d="M1 3l2 2 2-2v4L4 8v5H2V8L1 7z" fill="#e0e0e0" /></Ic>
            </PropTool>
            <PropTool>
              <Ic><path d="M11 0L3 9h4l-3 7 10-9H9l4-7z" fill="#f8e71c" stroke="#111" strokeWidth="0.500" /></Ic>
            </PropTool>
            <PropSep />
            <PropTool>
              <Ic><circle cx="11" cy="5" r="4.500" fill="#7a7a7a" /><circle cx="12" cy="4" r="1" fill="#2d2d30" /><path d="M8 6l-7 7v2h4v-2h2v-2l3-3z" fill="#7a7a7a" /></Ic>
            </PropTool>
          </PropsTools>
          <PropGrid>
            {propGroups.map(group => (
              <React.Fragment key={group.title}>
                <CatRow><ExpandBox />{group.title}</CatRow>
                {group.rows.map(([name, value]) => (
                  <PropRow key={name}>
                    <PropName $selected={name === 'ID'} $dim={name === '(Name)'}>{name}</PropName>
                    <PropValue $dim={name === '(Name)'}>
                      {value}
                      {name === 'ID' && (
                        <ValueDrop>
                          <Ic s={9} h={6}><path d="M1 1l3.500 3.500L8 1" fill="none" stroke="#555" /></Ic>
                        </ValueDrop>
                      )}
                    </PropValue>
                  </PropRow>
                ))}
              </React.Fragment>
            ))}
          </PropGrid>
          <PropDescription>
            <PropsBold>ID</PropsBold>
            <div>指定控件的标识符。</div>
          </PropDescription>
        </PropsWindow>
      </Main>

      <Annotation viewBox="0 0 1574 813">
        <polygon points="120,180 135,186 130,190 156,231 125,192 123,197" fill="#fb3a3a" />
        <polygon points="435,446 448,459 442,460 450,499 438,459 432,461" fill="#fb3a3a" />
        <polygon points="1457,677 1459,693 1452,690 1431,741 1446,686 1447,688" fill="#fb3a3a" />
      </Annotation>
      <RedNote>记住ID</RedNote>
    </Page>
  );
};

export default App;
